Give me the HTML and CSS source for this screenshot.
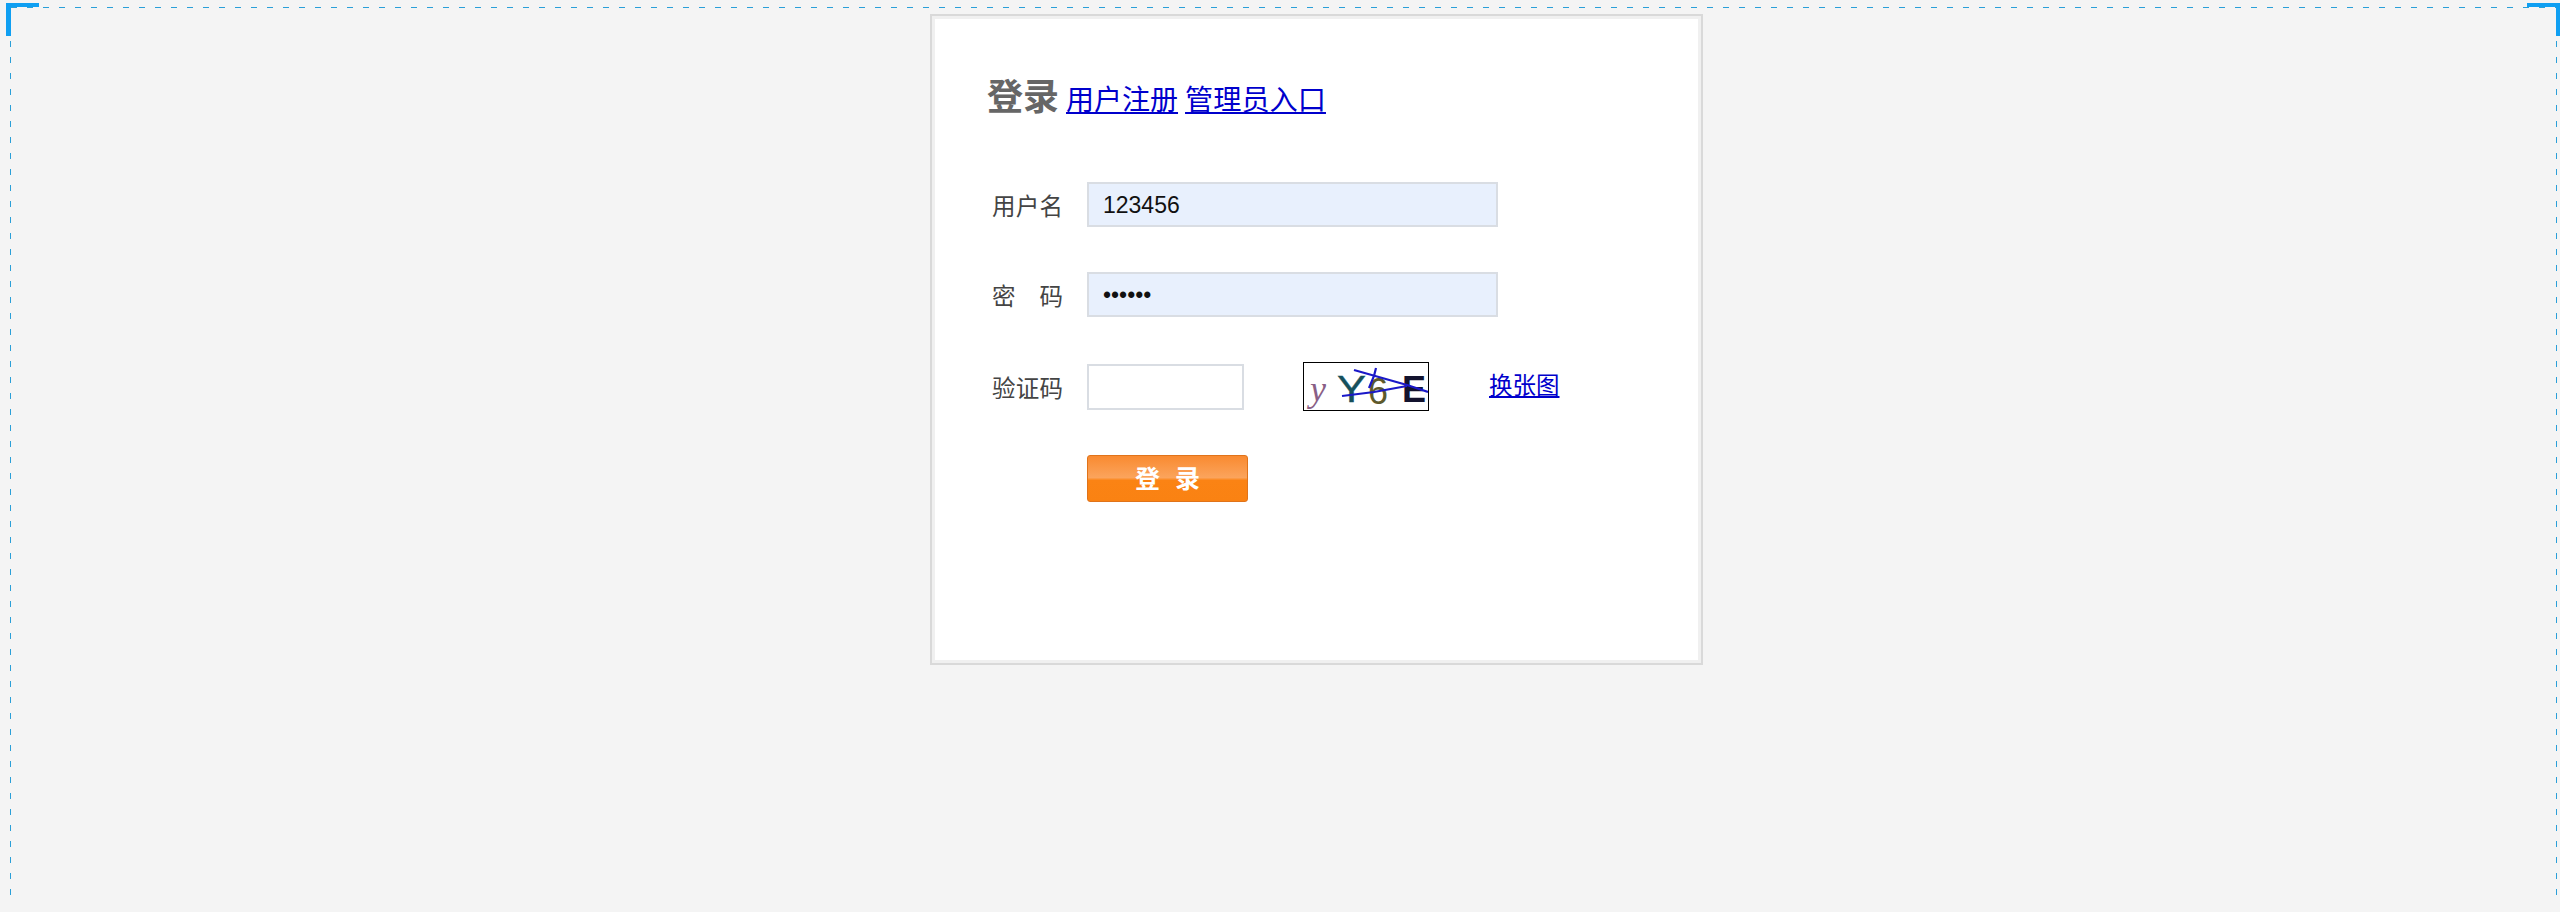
FILE: index.html
```html
<!DOCTYPE html>
<html lang="zh-CN">
<head>
    <meta charset="UTF-8">
    <meta name="viewport" content="width=device-width, initial-scale=1.0">
    <title>登录</title>
    <link rel="stylesheet" href="styles.css">
</head>
<body>
    <div class="frame">
        <span class="corner corner-left"></span>
        <span class="corner corner-right"></span>
        <div class="dash-top"></div>
        <div class="dash-side">
            <div class="login-box">
                <div class="login-inner">
                    <h2 class="login-title">
                        <span class="title-text">登录</span>
                        <a href="#">用户注册</a>
                        <a class="admin-link" href="#">管理员入口</a>
                    </h2>
                    <form class="login-form">
                        <div class="row row-user">
                            <label class="row-label">用户名</label>
                            <input class="field field-long" type="text" value="123456">
                        </div>
                        <div class="row row-pass">
                            <label class="row-label">密码</label>
                            <input class="field field-long" type="password" value="123456">
                        </div>
                        <div class="row row-code">
                            <label class="row-label">验证码</label>
                            <input class="field field-short" type="text">
                            <svg class="captcha" viewBox="0 0 124 47" width="124" height="47">
                                <text class="cap-y" x="6" y="38">y</text>
                                <text class="cap-big cap-teal" x="33" y="39" textLength="29" lengthAdjust="spacingAndGlyphs">Y</text>
                                <text class="cap-six" x="64" y="41">6</text>
                                <text class="cap-big cap-dark" x="98" y="39">E</text>
                                <path class="cap-line" d="M50 7 L103 22 L124 29"/>
                                <path class="cap-line" d="M38 33 L70 29 L103 23"/>
                                <path class="cap-line" d="M72 5 L70 13 L65 25"/>
                            </svg>
                            <a class="change-link" href="#">换张图</a>
                        </div>
                        <div class="row row-submit">
                            <button class="login-btn" type="button">登 录</button>
                        </div>
                    </form>
                </div>
            </div>
        </div>
    </div>
</body>
</html>
```
FILE: styles.css
```css
* {
    box-sizing: border-box;
}

html, body {
    margin: 0;
    height: 100%;
    overflow: hidden;
}

body {
    background-color: #f4f4f4;
    font-family: "Liberation Sans", "Noto Sans CJK SC", sans-serif;
}

.frame {
    position: relative;
    height: 100%;
    padding-top: 7px;
}

.corner {
    position: absolute;
    top: 3px;
    width: 33px;
    height: 33px;
    border-top: 4px solid #0f9ff2;
}

.corner-left {
    left: 6px;
    border-left: 5px solid #0f9ff2;
}

.corner-right {
    right: 0;
    border-right: 4px solid #0f9ff2;
}

.dash-top {
    height: 1px;
    margin: 0 4px 0 11px;
    background-image: repeating-linear-gradient(to right, #2a9fd8 0, #2a9fd8 6px, transparent 6px, transparent 16px);
}

.dash-side {
    height: calc(100% - 8px);
    margin: 0 3px 0 10px;
    padding-top: 6px;
    background-image:
        repeating-linear-gradient(to bottom, #2a9fd8 0, #2a9fd8 6px, transparent 6px, transparent 16px),
        repeating-linear-gradient(to bottom, #2a9fd8 0, #2a9fd8 6px, transparent 6px, transparent 16px);
    background-size: 1px 100%, 1px 100%;
    background-position: left 0 top 1px, right 0 top 1px;
    background-repeat: no-repeat;
}

.login-box {
    width: 773px;
    height: 651px;
    margin-left: 920px;
    border: 2px solid #d9d9d9;
}

.login-inner {
    height: 100%;
    padding: 58px 0 0 52px;
    border: 3px solid #f0f0f0;
    background-color: #fff;
}

.login-title {
    display: flex;
    align-items: baseline;
    gap: 7px;
    height: 42px;
    margin: 0 0 63px;
    font-size: 28px;
    font-weight: normal;
    line-height: 42px;
}

.title-text {
    color: #666;
    font-size: 36px;
    font-weight: bold;
}

.login-title a,
.change-link {
    color: #0000cc;
}

.admin-link {
    font-size: 28.2px;
}

.row {
    display: flex;
    align-items: center;
    padding-left: 5px;
}

.row-user,
.row-pass {
    height: 45px;
    margin-bottom: 45px;
}

.row-code {
    height: 49px;
    margin-bottom: 44px;
}

.row-submit {
    height: 47px;
}

.row-label {
    width: 71px;
    margin-right: 24px;
    color: #444;
    font-size: 23.5px;
    text-align: justify;
    text-align-last: justify;
}

.field {
    height: 45px;
    padding: 2px 14px 0;
    border: 2px solid #d9dde3;
    background-color: #e8f0fd;
    color: #111;
    font-family: inherit;
    font-size: 23px;
    outline: none;
}

.field-long {
    width: 411px;
}

.field-short {
    width: 157px;
    height: 46px;
    background-color: #fff;
}

.captcha {
    box-sizing: content-box;
    margin-left: 59px;
    border: 1px solid #000;
    background-color: #fff;
}

.cap-y {
    fill: #8a5f86;
    font-family: "Liberation Serif", serif;
    font-size: 36px;
    font-style: italic;
}

.cap-big {
    font-family: "Liberation Sans", sans-serif;
    font-size: 36px;
}

.cap-teal {
    fill: #16505c;
    stroke: #16505c;
    stroke-width: 0.4;
}

.cap-dark {
    fill: #13132e;
    font-weight: bold;
}

.cap-six {
    fill: #5e5a2c;
    font-family: "Liberation Sans", sans-serif;
    font-size: 36px;
}

.cap-line {
    fill: none;
    stroke: #1a18c8;
    stroke-width: 2.2;
}

.change-link {
    margin: -5px 0 0 60px;
    font-size: 23.5px;
}

.login-btn {
    width: 161px;
    height: 47px;
    margin-left: 95px;
    padding: 0 0 3px;
    border: 1px solid #e0731a;
    border-radius: 3px;
    background-image: linear-gradient(to bottom, #f98a30 0, #fba45c 48%, #fb8314 54%, #fa8212 100%);
    color: #fff;
    font-family: inherit;
    font-size: 25px;
    font-weight: bold;
    word-spacing: 8px;
    cursor: pointer;
}
```
